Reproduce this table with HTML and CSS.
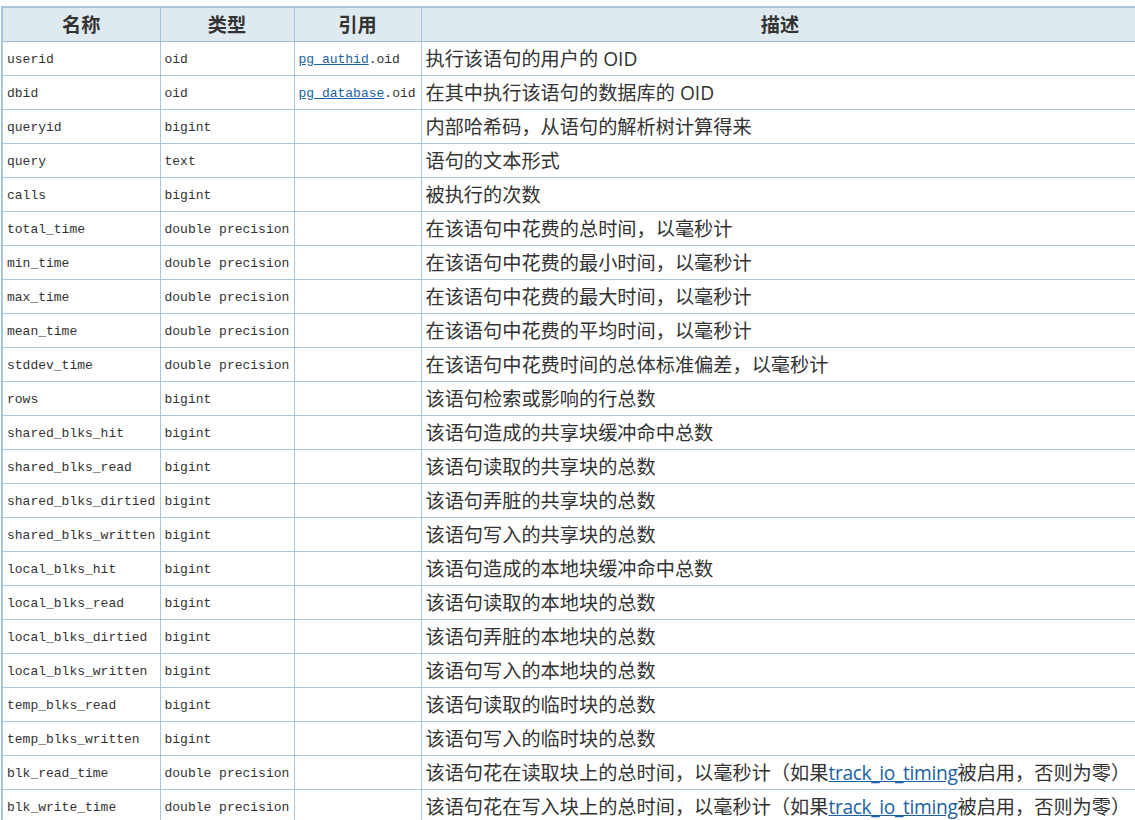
FILE: index.html
```html
<!DOCTYPE html>
<html lang="zh">
<head>
<meta charset="utf-8">
<title>pg_stat_statements</title>
<link rel="stylesheet" href="styles.css">
</head>
<body>
<div class="wrap">
<table class="cols">
<colgroup>
<col class="c-name"><col class="c-type"><col class="c-ref"><col class="c-desc">
</colgroup>
<thead>
<tr><th>名称</th><th>类型</th><th>引用</th><th>描述</th></tr>
</thead>
<tbody>
<tr><td class="mono">userid</td><td class="mono">oid</td><td class="mono"><a href="#">pg_authid</a>.oid</td><td>执行该语句的用户的 OID</td></tr>
<tr><td class="mono">dbid</td><td class="mono">oid</td><td class="mono"><a href="#">pg_database</a>.oid</td><td>在其中执行该语句的数据库的 OID</td></tr>
<tr><td class="mono">queryid</td><td class="mono">bigint</td><td class="mono"></td><td>内部哈希码，从语句的解析树计算得来</td></tr>
<tr><td class="mono">query</td><td class="mono">text</td><td class="mono"></td><td>语句的文本形式</td></tr>
<tr><td class="mono">calls</td><td class="mono">bigint</td><td class="mono"></td><td>被执行的次数</td></tr>
<tr><td class="mono">total_time</td><td class="mono">double precision</td><td class="mono"></td><td>在该语句中花费的总时间，以毫秒计</td></tr>
<tr><td class="mono">min_time</td><td class="mono">double precision</td><td class="mono"></td><td>在该语句中花费的最小时间，以毫秒计</td></tr>
<tr><td class="mono">max_time</td><td class="mono">double precision</td><td class="mono"></td><td>在该语句中花费的最大时间，以毫秒计</td></tr>
<tr><td class="mono">mean_time</td><td class="mono">double precision</td><td class="mono"></td><td>在该语句中花费的平均时间，以毫秒计</td></tr>
<tr><td class="mono">stddev_time</td><td class="mono">double precision</td><td class="mono"></td><td>在该语句中花费时间的总体标准偏差，以毫秒计</td></tr>
<tr><td class="mono">rows</td><td class="mono">bigint</td><td class="mono"></td><td>该语句检索或影响的行总数</td></tr>
<tr><td class="mono">shared_blks_hit</td><td class="mono">bigint</td><td class="mono"></td><td>该语句造成的共享块缓冲命中总数</td></tr>
<tr><td class="mono">shared_blks_read</td><td class="mono">bigint</td><td class="mono"></td><td>该语句读取的共享块的总数</td></tr>
<tr><td class="mono">shared_blks_dirtied</td><td class="mono">bigint</td><td class="mono"></td><td>该语句弄脏的共享块的总数</td></tr>
<tr><td class="mono">shared_blks_written</td><td class="mono">bigint</td><td class="mono"></td><td>该语句写入的共享块的总数</td></tr>
<tr><td class="mono">local_blks_hit</td><td class="mono">bigint</td><td class="mono"></td><td>该语句造成的本地块缓冲命中总数</td></tr>
<tr><td class="mono">local_blks_read</td><td class="mono">bigint</td><td class="mono"></td><td>该语句读取的本地块的总数</td></tr>
<tr><td class="mono">local_blks_dirtied</td><td class="mono">bigint</td><td class="mono"></td><td>该语句弄脏的本地块的总数</td></tr>
<tr><td class="mono">local_blks_written</td><td class="mono">bigint</td><td class="mono"></td><td>该语句写入的本地块的总数</td></tr>
<tr><td class="mono">temp_blks_read</td><td class="mono">bigint</td><td class="mono"></td><td>该语句读取的临时块的总数</td></tr>
<tr><td class="mono">temp_blks_written</td><td class="mono">bigint</td><td class="mono"></td><td>该语句写入的临时块的总数</td></tr>
<tr><td class="mono">blk_read_time</td><td class="mono">double precision</td><td class="mono"></td><td>该语句花在读取块上的总时间，以毫秒计（如果<a class="term" href="#">track_io_timing</a>被启用，否则为零）</td></tr>
<tr><td class="mono">blk_write_time</td><td class="mono">double precision</td><td class="mono"></td><td>该语句花在写入块上的总时间，以毫秒计（如果<a class="term" href="#">track_io_timing</a>被启用，否则为零）</td></tr>
</tbody>
</table>
</div>
</body>
</html>
```

FILE: styles.css
```css
html, body {
  margin: 0;
  padding: 0;
  overflow: hidden;
  background: #ffffff;
}

.wrap {
  padding: 6px 0 0 1px;
}

.cols {
  border-collapse: collapse;
  table-layout: fixed;
  width: 1137px;
  border-top: 2px solid #a7c6e0;
  border-left: 2px solid #a7c6e0;
  font-family: "Open Sans", "Noto Sans CJK SC", sans-serif;
  font-size: 19.2px;
  line-height: 24px;
  color: #333333;
}

.c-name { width: 158px; }
.c-type { width: 134px; }
.c-ref { width: 127px; }
.c-desc { width: 718px; }

.cols th,
.cols td {
  border: 1px solid #a7c6e0;
  padding: 0 4px;
  height: 33px;
  text-align: left;
  white-space: nowrap;
  overflow: hidden;
}

.cols th {
  background: #dfe9f0;
  text-align: center;
  font-weight: bold;
  color: #333333;
  border-bottom-color: #a3bccf;
}

.cols td.mono {
  font-family: "Liberation Mono", monospace;
  font-size: 13px;
  line-height: 16px;
  color: #333333;
  height: 31px;
  padding-top: 2px;
  padding-bottom: 0;
}

.cols a {
  color: #1a62a3;
  text-decoration: underline;
}

.cols a.term {
  letter-spacing: -0.35px;
}
```
